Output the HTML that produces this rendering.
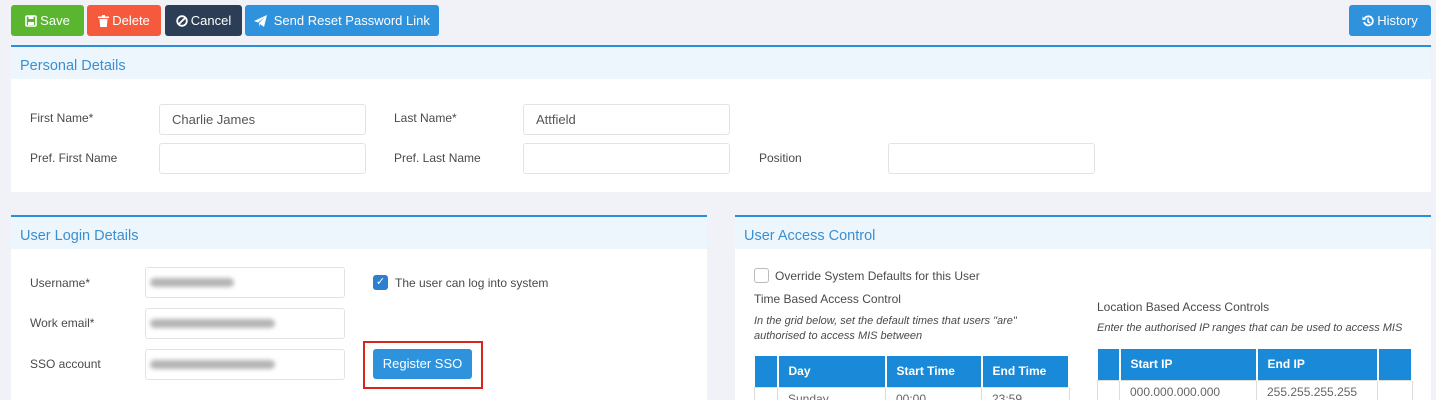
<!DOCTYPE html>
<html><head><style>
*{box-sizing:border-box;margin:0;padding:0}
html{width:1436px;height:400px;overflow:hidden}
body{width:1436px;height:400px;overflow:hidden;background:#f1f2f7;font-family:"Liberation Sans",sans-serif;font-size:12px;color:#555;position:relative}
.a{position:absolute}
.btn{position:absolute;top:5px;height:31px;border-radius:3px;color:#fff;font-size:13px;line-height:31px;text-align:center}
.btn svg{vertical-align:-2px;margin-right:3px}
.panel{position:absolute;background:#fff;border-top:2px solid #2a8fd8;overflow:hidden}
.ph{height:32px;background:#eef6fd;color:#3a8fd0;font-size:14.5px;line-height:32px;padding-left:9px;padding-top:3px}
.inp{position:absolute;background:#fff;border:1px solid #e3e3e3;border-radius:3px;height:31px;font-size:13px;line-height:29px;padding-left:12px;color:#555}
.lbl{position:absolute;font-size:12px;color:#4a4a4a}
.blur{position:absolute;height:9px;background:#b5b5b5;border-radius:5px;filter:blur(2px)}
table{position:absolute;border-collapse:collapse;font-size:12px}
th{background:#1a8ad8;color:#fff;text-align:left;font-weight:bold;padding-left:10px;border-right:2px solid #fff;height:31px}
td{border:1px solid #ddd;height:24px;padding-left:10px;color:#666}
</style></head><body>
<div class="btn" style="left:11px;width:73px;background:#5ab52f"><svg width="12" height="12" viewBox="0 0 12 12"><rect x="1" y="1" width="10" height="10" rx="1" fill="none" stroke="#fff" stroke-width="1.6"/><rect x="3.5" y="1" width="5" height="3" fill="#fff"/><rect x="3" y="7" width="6" height="3" fill="#fff"/></svg>Save</div>
<div class="btn" style="left:87px;width:74px;background:#f55a3c"><svg width="11" height="12" viewBox="0 0 11 12"><rect x="0" y="1.5" width="11" height="1.6" fill="#fff"/><rect x="4" y="0" width="3" height="2" fill="#fff"/><path d="M1.5 4h8l-.7 8h-6.6z" fill="#fff"/></svg>Delete</div>
<div class="btn" style="left:165px;width:77px;background:#2c3e55"><svg width="12" height="12" viewBox="0 0 12 12"><circle cx="6" cy="6" r="4.8" fill="none" stroke="#fff" stroke-width="1.8"/><path d="M2.6 9.4L9.4 2.6" stroke="#fff" stroke-width="1.8"/></svg>Cancel</div>
<div class="btn" style="left:245px;width:194px;background:#2f92dc"><svg width="13" height="12" viewBox="0 0 13 12"><path d="M0 6L13 0L10 12L6 9L5 12V8L11 2L4 7.5z" fill="#fff"/></svg> Send Reset Password Link</div>
<div class="btn" style="left:1349px;width:82px;background:#2f92dc"><svg width="12" height="12" viewBox="0 0 12 12"><path d="M2.5 3.5A4.5 4.5 0 1 1 2 7" fill="none" stroke="#fff" stroke-width="1.8"/><path d="M0.5 1.5V5H4z" fill="#fff"/><path d="M6 3.5V6.5L8 8" fill="none" stroke="#fff" stroke-width="1.5"/></svg>History</div>

<div class="panel" style="left:11px;top:45px;width:1420px;height:147px"><div class="ph">Personal Details</div></div>
<div class="lbl" style="left:30px;top:111px">First Name*</div>
<div class="inp" style="left:159px;top:104px;width:207px">Charlie James</div>
<div class="lbl" style="left:394px;top:111px">Last Name*</div>
<div class="inp" style="left:523px;top:104px;width:207px">Attfield</div>
<div class="lbl" style="left:30px;top:151px">Pref. First Name</div>
<div class="inp" style="left:159px;top:143px;width:207px"></div>
<div class="lbl" style="left:394px;top:151px">Pref. Last Name</div>
<div class="inp" style="left:523px;top:143px;width:207px"></div>
<div class="lbl" style="left:759px;top:151px">Position</div>
<div class="inp" style="left:888px;top:143px;width:207px"></div>

<div class="panel" style="left:11px;top:215px;width:696px;height:185px"><div class="ph">User Login Details</div></div>
<div class="lbl" style="left:30px;top:276px">Username*</div>
<div class="inp" style="left:145px;top:267px;width:200px"></div><div class="blur" style="left:150px;top:278px;width:84px"></div>
<div class="lbl" style="left:30px;top:316px">Work email*</div>
<div class="inp" style="left:145px;top:308px;width:200px"></div><div class="blur" style="left:150px;top:319px;width:125px"></div>
<div class="lbl" style="left:30px;top:357px">SSO account</div>
<div class="inp" style="left:145px;top:349px;width:200px"></div><div class="blur" style="left:150px;top:360px;width:125px"></div>
<div class="a" style="left:373px;top:275px;width:15px;height:15px;background:#2f7fd0;border-radius:3px;color:#fff;font-size:11px;line-height:15px;text-align:center">&#10003;</div>
<div class="lbl" style="left:395px;top:276px">The user can log into system</div>
<div class="a" style="left:363px;top:341px;width:120px;height:48px;border:2px solid #d9251a"></div>
<div class="a" style="left:373px;top:349px;width:99px;height:30px;background:#2f92dc;border-radius:3px;color:#fff;font-size:13px;line-height:30px;text-align:center">Register SSO</div>

<div class="panel" style="left:735px;top:215px;width:696px;height:185px"><div class="ph">User Access Control</div></div>
<div class="a" style="left:754px;top:268px;width:15px;height:15px;border:1px solid #bbb;border-radius:3px"></div>
<div class="lbl" style="left:775px;top:269px">Override System Defaults for this User</div>
<div class="lbl" style="left:754px;top:292px">Time Based Access Control</div>
<div class="lbl" style="left:754px;top:314px;font-style:italic;font-size:11px;line-height:15px">In the grid below, set the default times that users "are"<br>authorised to access MIS between</div>
<div class="lbl" style="left:1097px;top:300px">Location Based Access Controls</div>
<div class="lbl" style="left:1097px;top:322px;font-style:italic;font-size:11px">Enter the authorised IP ranges that can be used to access MIS</div>
<table style="left:754px;top:356px;width:316px"><tr><th style="width:23px"></th><th style="width:108px">Day</th><th style="width:96px">Start Time</th><th>End Time</th></tr><tr><td></td><td>Sunday</td><td>00:00</td><td>23:59</td></tr></table>
<table style="left:1097px;top:349px;width:316px"><tr><th style="width:22px"></th><th style="width:137px">Start IP</th><th style="width:121px">End IP</th><th></th></tr><tr><td></td><td>000.000.000.000</td><td>255.255.255.255</td><td></td></tr></table>
</body></html>
